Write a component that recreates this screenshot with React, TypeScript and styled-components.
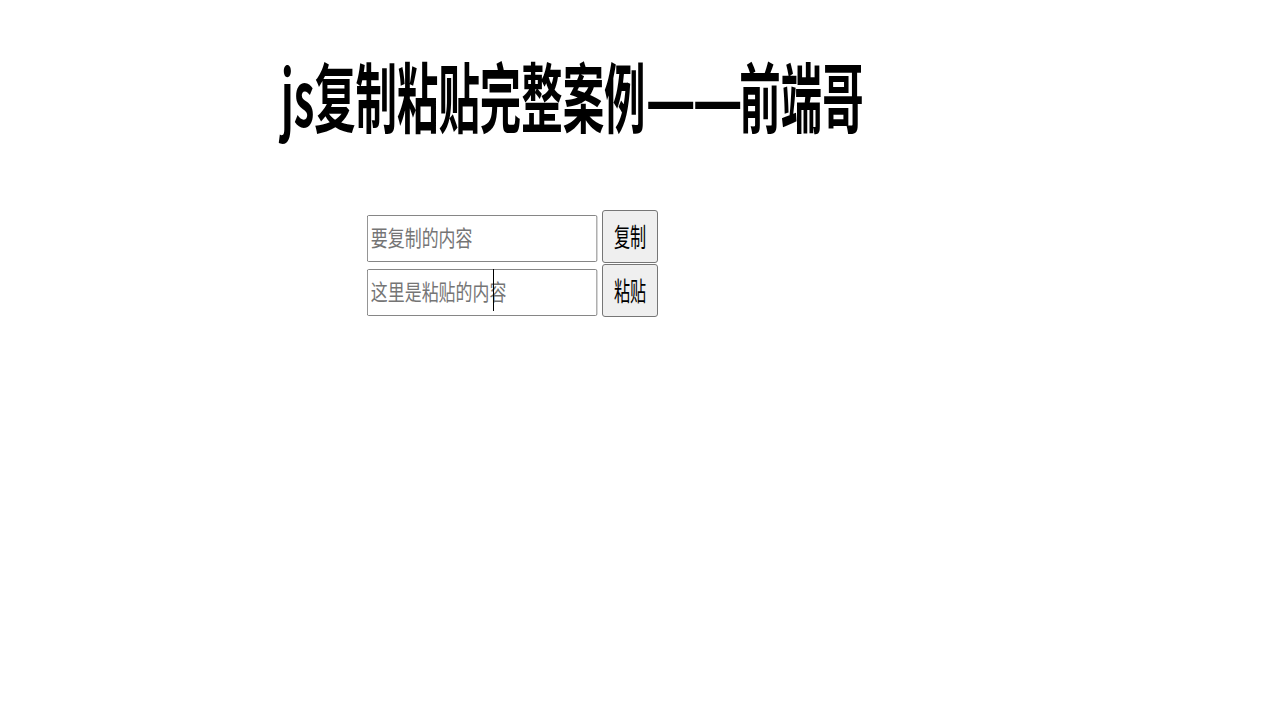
import styled, { createGlobalStyle } from "styled-components";

const Global = createGlobalStyle`
  html, body { margin: 0; background: #ffffff; }
  body { font-family: "Noto Sans CJK SC", "Noto Sans", sans-serif; color: #000; }
`;

const Page = styled.main`
  display: flex;
  flex-direction: column;
  padding: 56px 0 0 281px;
`;

const Title = styled.h1`
  margin: 0;
  font-size: 76px;
  line-height: 1;
  font-weight: 700;
  white-space: nowrap;
  transform: scaleX(0.545);
  transform-origin: left center;
`;

const Dash = styled.span`
  display: inline-block;
  width: 86px;
  transform: scaleX(1.34);
  transform-origin: left center;
`;

const Form = styled.section`
  display: flex;
  flex-direction: column;
  gap: 1px;
  margin: 78px 0 0 86px;
`;

const Row = styled.div`
  display: flex;
  align-items: flex-end;
  gap: 5px;
`;

const FieldBox = styled.div`
  position: relative;
  width: 230px;
  height: 47px;
  margin-bottom: 1px;
`;

const Field = styled.input`
  box-sizing: border-box;
  width: 299px;
  height: 47px;
  padding: 0 4px 5px;
  border: 1px solid #767676;
  border-radius: 2px;
  font-family: "Noto Sans CJK SC", sans-serif;
  font-size: 22px;
  color: #000;
  background: #fff;
  transform: scaleX(0.77);
  transform-origin: left center;
  &::placeholder { color: #757575; }
  &:focus { outline: none; }
`;

const Button = styled.button`
  box-sizing: border-box;
  display: flex;
  align-items: center;
  justify-content: center;
  width: 56px;
  height: 53px;
  padding: 0 0 2px;
  border: 1px solid #767676;
  border-radius: 3px;
  background: #efefef;
  color: #000;
  font-family: "Noto Sans CJK SC", sans-serif;
  font-size: 26px;
  cursor: pointer;
`;

const Label = styled.span`
  display: inline-block;
  transform: scaleX(0.62);
  white-space: nowrap;
`;

const Caret = styled.span`
  position: absolute;
  left: 126px;
  top: 0;
  width: 1px;
  height: 42px;
  background: #000;
  pointer-events: none;
`;

export default function App() {
  return (
    <Page>
      <Global />
      <Title>
        js复制粘贴完整案例<Dash>—</Dash><Dash>—</Dash>前端哥
      </Title>
      <Form>
        <Row>
          <FieldBox>
            <Field type="text" placeholder="要复制的内容" />
          </FieldBox>
          <Button>
            <Label>复制</Label>
          </Button>
        </Row>
        <Row>
          <FieldBox>
            <Field type="text" placeholder="这里是粘贴的内容" />
            <Caret />
          </FieldBox>
          <Button>
            <Label>粘贴</Label>
          </Button>
        </Row>
      </Form>
    </Page>
  );
}
